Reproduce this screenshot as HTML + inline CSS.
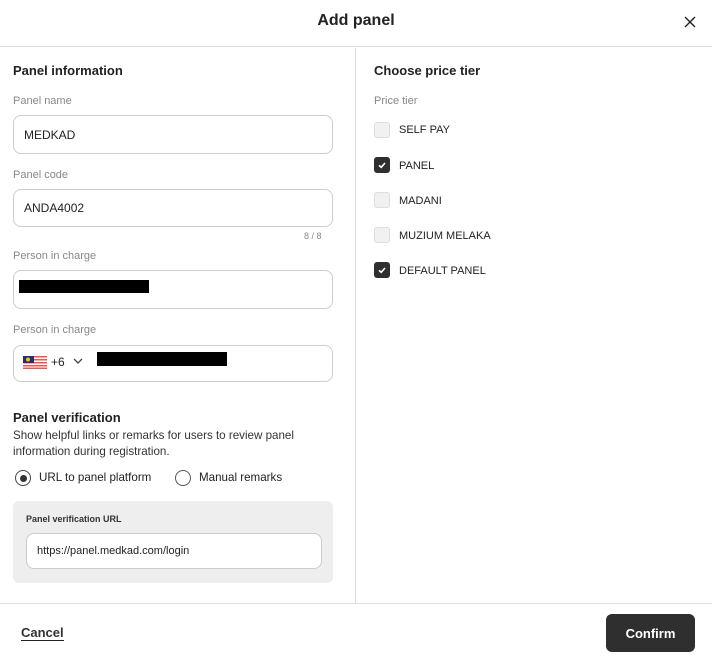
<!DOCTYPE html><html><head><style>
*{box-sizing:border-box;margin:0;padding:0}
body{width:712px;height:664px;background:#fff;font-family:"Liberation Sans",sans-serif;color:#222;position:relative;overflow:hidden}
.a{position:absolute}
.t{font-size:13px;font-weight:bold;color:#222}
.l{font-size:11px;color:#888}
.in{position:absolute;left:13px;width:320px;border:1px solid #ccc;border-radius:8px;background:#fff;font-size:12px;color:#222;padding-left:10px;display:flex;align-items:center}
.cb{position:absolute;left:374px;width:16px;height:16px;border-radius:3px;background:#f1f1f3;border:1px solid #ddd}
.cb.on{background:#2f2f2f;border-color:#2f2f2f}
.cl{position:absolute;left:399px;font-size:11px;color:#222}
.r{position:absolute;width:16px;height:16px;border-radius:50%;border:1.5px solid #444}
</style></head><body>
<div class="a" style="left:0;top:0;width:712px;height:47px;border-bottom:1px solid #ddd"></div>
<div class="a" style="left:0;top:12px;width:712px;text-align:center;font-size:16px;font-weight:bold">Add panel</div>
<svg class="a" style="left:684px;top:16px" width="12" height="12" viewBox="0 0 12 12"><path d="M1 1L11 11M11 1L1 11" stroke="#222" stroke-width="1.4"/></svg>
<div class="a" style="left:355px;top:48px;width:1px;height:555px;background:#ddd"></div>
<div class="a" style="left:0;top:603px;width:712px;height:1px;background:#ddd"></div>

<div class="a t" style="left:13px;top:63px">Panel information</div>
<div class="a l" style="left:13px;top:95px">Panel name</div>
<div class="in" style="top:115px;height:39px">MEDKAD</div>
<div class="a l" style="left:13px;top:169px">Panel code</div>
<div class="in" style="top:189px;height:38px">ANDA4002</div>
<div class="a" style="left:304px;top:231px;font-size:9px;color:#888">8 / 8</div>
<div class="a l" style="left:13px;top:250px">Person in charge</div>
<div class="in" style="top:270px;height:39px"></div>
<div class="a" style="left:19px;top:280px;width:130px;height:13px;background:#000"></div>
<div class="a l" style="left:13px;top:324px">Person in charge</div>
<div class="in" style="top:345px;height:37px"></div>
<svg class="a" style="left:23px;top:356px" width="24" height="13"><rect width="24" height="13" fill="#fff"/><g fill="#e55"><rect y="0" width="24" height="1.5"/><rect y="3" width="24" height="1.5"/><rect y="6" width="24" height="1.5"/><rect y="9" width="24" height="1.5"/><rect y="11.5" width="24" height="1.5"/></g><rect width="11" height="7" fill="#22307a"/><circle cx="5" cy="3.5" r="2" fill="#f5c400"/></svg>
<div class="a" style="left:51px;top:355px;font-size:12px">+6</div>
<svg class="a" style="left:73px;top:358px" width="10" height="6"><path d="M1 1L5 5L9 1" stroke="#444" fill="none" stroke-width="1.3"/></svg>
<div class="a" style="left:97px;top:352px;width:130px;height:14px;background:#000"></div>

<div class="a t" style="left:13px;top:410px">Panel verification</div>
<div class="a" style="left:13px;top:428px;font-size:11.6px;color:#333;line-height:16px;width:320px">Show helpful links or remarks for users to review panel information during registration.</div>
<div class="r" style="left:15px;top:470px"></div><div class="a" style="left:19.5px;top:474.5px;width:7px;height:7px;border-radius:50%;background:#333"></div>
<div class="a" style="left:39px;top:471px;font-size:11.6px">URL to panel platform</div>
<div class="r" style="left:175px;top:470px;border-color:#555"></div>
<div class="a" style="left:199px;top:471px;font-size:11.6px">Manual remarks</div>
<div class="a" style="left:13px;top:501px;width:320px;height:82px;background:#eee;border-radius:6px"></div>
<div class="a" style="left:26px;top:514px;font-size:9px;font-weight:bold;color:#333">Panel verification URL</div>
<div class="in" style="left:26px;top:533px;width:296px;height:36px;font-size:11px">https://panel.medkad.com/login</div>

<div class="a t" style="left:374px;top:63px">Choose price tier</div>
<div class="a l" style="left:374px;top:95px">Price tier</div>
<div class="cb" style="top:122px"></div><div class="cl" style="top:124px">SELF PAY</div>
<div class="cb on" style="top:157px"></div><div class="cl" style="top:160px">PANEL</div>
<div class="cb" style="top:192px"></div><div class="cl" style="top:195px">MADANI</div>
<div class="cb" style="top:227px"></div><div class="cl" style="top:230px">MUZIUM MELAKA</div>
<div class="cb on" style="top:262px"></div><div class="cl" style="top:265px">DEFAULT PANEL</div>
<svg class="a" style="left:374px;top:157px" width="16" height="16"><path d="M5 8.3L7.2 10.3L11 6" stroke="#fff" stroke-width="1.6" fill="none"/></svg>
<svg class="a" style="left:374px;top:262px" width="16" height="16"><path d="M5 8.3L7.2 10.3L11 6" stroke="#fff" stroke-width="1.6" fill="none"/></svg>

<div class="a" style="left:21px;top:625px;font-size:13px;font-weight:bold;color:#333;border-bottom:1.5px solid #222;line-height:15px">Cancel</div>
<div class="a" style="left:606px;top:614px;width:89px;height:38px;border-radius:6px;background:#2f2f2f;color:#fff;font-size:13px;font-weight:bold;display:flex;align-items:center;justify-content:center">Confirm</div>
</body></html>
